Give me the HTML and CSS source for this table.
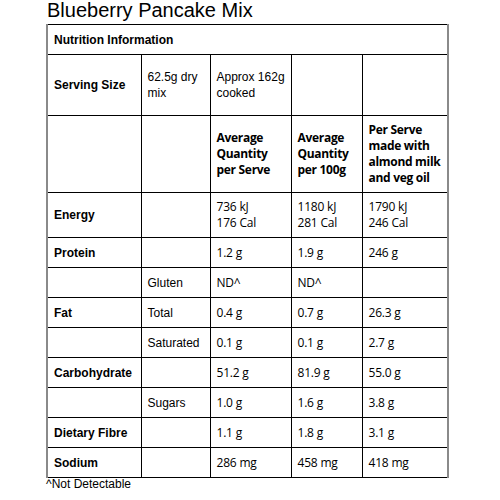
FILE: index.html
```html
<!DOCTYPE html>
<html>
<head>
<meta charset="utf-8">
<link rel="stylesheet" href="styles.css">
</head>
<body>
<div class="wrap">
  <h1 class="title">Blueberry Pancake Mix</h1>
  <table class="nutri">
    <colgroup>
      <col class="c1"><col class="c2"><col class="c3"><col class="c4"><col class="c5">
    </colgroup>
    <tr class="r30"><th class="lbl" colspan="5">Nutrition Information</th></tr>
    <tr class="r61">
      <th class="lbl">Serving Size</th>
      <td class="sub">62.5g dry<br>mix</td>
      <td class="sub">Approx 162g<br>cooked</td>
      <td></td>
      <td></td>
    </tr>
    <tr class="r77">
      <td></td>
      <td></td>
      <th class="hd">Average<br>Quantity<br>per Serve</th>
      <th class="hd">Average<br>Quantity<br>per 100g</th>
      <th class="hd">Per Serve<br>made with<br>almond milk<br>and veg oil</th>
    </tr>
    <tr class="r45">
      <th class="lbl">Energy</th><td></td>
      <td class="val">736 kJ<br>176 Cal</td>
      <td class="val">1180 kJ<br>281 Cal</td>
      <td class="val">1790 kJ<br>246 Cal</td>
    </tr>
    <tr class="r30"><th class="lbl">Protein</th><td></td><td class="val">1.2 g</td><td class="val">1.9 g</td><td class="val">246 g</td></tr>
    <tr class="r30"><td></td><td class="sub">Gluten</td><td class="val">ND^</td><td class="val">ND^</td><td></td></tr>
    <tr class="r30"><th class="lbl">Fat</th><td class="sub">Total</td><td class="val">0.4 g</td><td class="val">0.7 g</td><td class="val">26.3 g</td></tr>
    <tr class="r30"><td></td><td class="sub">Saturated</td><td class="val">0.1 g</td><td class="val">0.1 g</td><td class="val">2.7 g</td></tr>
    <tr class="r30"><th class="lbl">Carbohydrate</th><td></td><td class="val">51.2 g</td><td class="val">81.9 g</td><td class="val">55.0 g</td></tr>
    <tr class="r30"><td></td><td class="sub">Sugars</td><td class="val">1.0 g</td><td class="val">1.6 g</td><td class="val">3.8 g</td></tr>
    <tr class="r30"><th class="lbl">Dietary Fibre</th><td></td><td class="val">1.1 g</td><td class="val">1.8 g</td><td class="val">3.1 g</td></tr>
    <tr class="r30"><th class="lbl">Sodium</th><td></td><td class="val">286 mg</td><td class="val">458 mg</td><td class="val">418 mg</td></tr>
  </table>
  <p class="note">^Not Detectable</p>
</div>
</body>
</html>
```
FILE: styles.css
```css
html, body {
  margin: 0;
  padding: 0;
  background: #fff;
  color: #000;
}
.wrap {
  margin-left: 46px;
  width: 402px;
  font-family: "Liberation Sans", Arial, sans-serif;
}
.title {
  margin: 0 0 4px 1px;
  font-size: 20px;
  line-height: 20px;
  font-weight: normal;
}
.nutri {
  border-collapse: collapse;
  table-layout: fixed;
  width: 401px;
  border-left: 2px solid #8a8a8a;
  border-right: 2px solid #8a8a8a;
}
.c1 { width: 94px; }
.c2 { width: 69px; }
.c3 { width: 81px; }
.c4 { width: 71px; }
.c5 { width: 86px; }
.nutri th, .nutri td {
  border: 1px solid #000;
  padding: 0 2px 0 6px;
  vertical-align: middle;
  text-align: left;
  font-size: 12px;
  line-height: 16px;
  white-space: nowrap;
}
.nutri tr > :first-child { border-left: 2px solid #8a8a8a; }
.nutri tr > :last-child { border-right: 2px solid #8a8a8a; }
.r30 { height: 30px; }
.r45 { height: 45px; }
.r61 { height: 61px; }
.r77 { height: 77px; }
.lbl {
  font-weight: bold;
  font-family: "Liberation Sans", Arial, sans-serif;
}
.sub {
  font-weight: normal;
  font-family: "Liberation Sans", Arial, sans-serif;
}
.hd {
  font-family: "Open Sans", sans-serif;
  font-weight: bold;
  letter-spacing: -0.3px;
}
.val {
  font-family: "Open Sans", sans-serif;
  font-weight: normal;
  letter-spacing: -0.2px;
}
.note {
  margin: 0;
  font-size: 12px;
  line-height: 12px;
}
```
